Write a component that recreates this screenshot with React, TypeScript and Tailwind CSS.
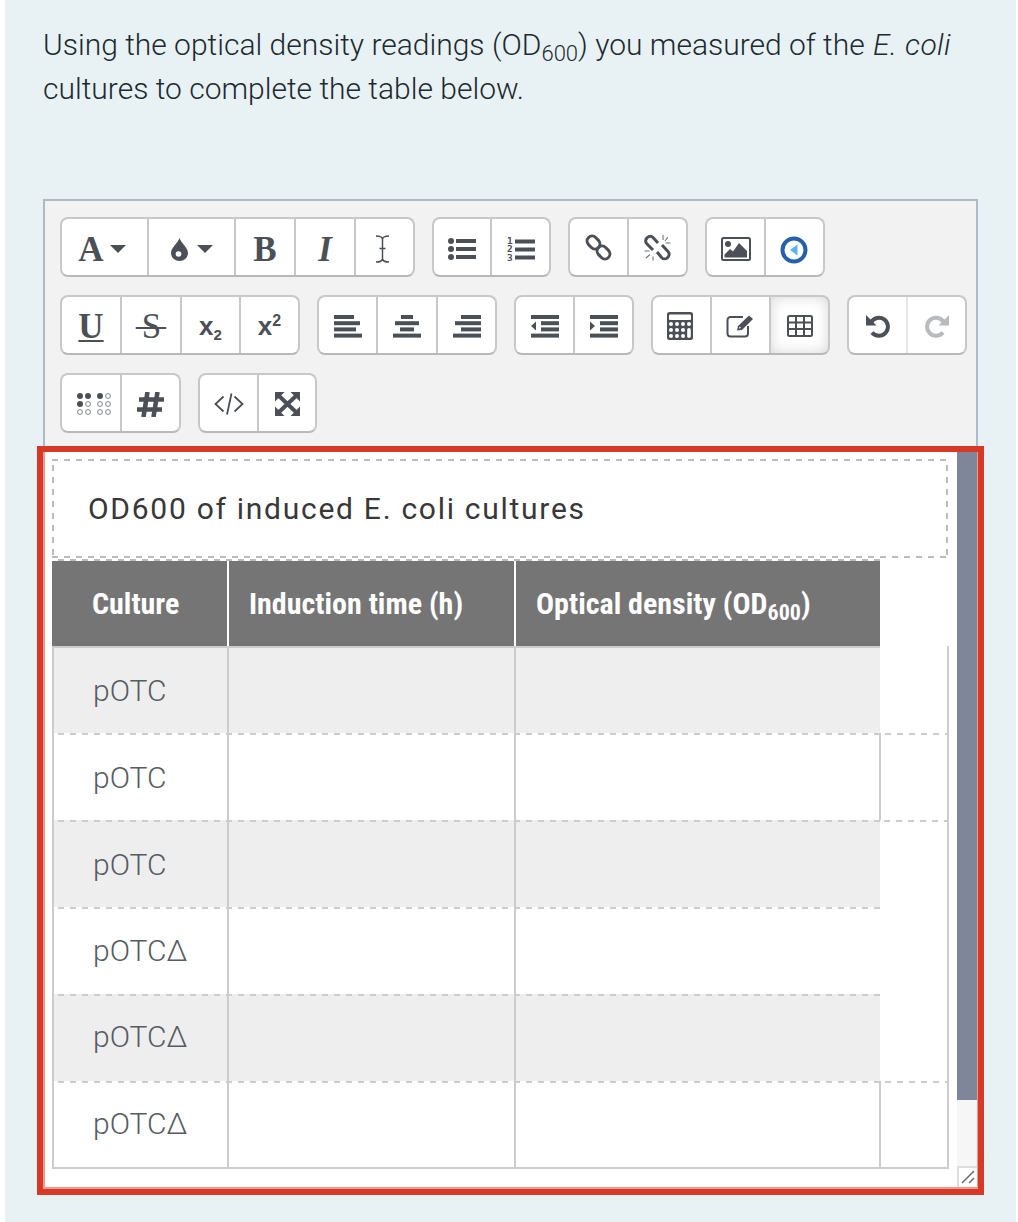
import type { ReactNode } from "react";

const ink = "#4b5057";

function Caret() {
  return (
    <svg width="16" height="8" viewBox="0 0 16 8" className="ml-[6px]">
      <path d="M0 0h16l-8 8z" fill={ink} />
    </svg>
  );
}

function Btn({ w = "w-[59px]", first, light, active, children }: { w?: string; first?: boolean; light?: boolean; active?: boolean; children: ReactNode }) {
  return (
    <div
      className={`${w} h-full pt-[2px] flex items-center justify-center ${first ? "" : light ? "border-l-2 border-[#e6e6e6]" : "border-l-2 border-[#c8c8c8]"} ${active ? "rounded-r-[6px] shadow-[inset_0_0_14px_rgba(0,0,0,0.16)]" : ""}`}
    >
      {children}
    </div>
  );
}

function Group({ children }: { children: ReactNode }) {
  return <div className="flex h-[60px] bg-white border-2 border-[#c8c8c8] border-b-[#b8b8b8] rounded-[8px]">{children}</div>;
}

const serif = "font-['Liberation_Serif'] text-[35px] leading-none text-[#4b5057]";

function Bars({ rows }: { rows: [number, number][] }) {
  return (
    <svg width="28" height="23" viewBox="0 0 28 23">
      {rows.map(([x, w], i) => (
        <rect key={i} x={x} y={i * 6.2} width={w} height="4" fill={ink} />
      ))}
    </svg>
  );
}

function IndentIcon({ arrow }: { arrow: string }) {
  return (
    <svg width="28" height="23" viewBox="0 0 28 23" fill={ink}>
      <rect width="28" height="4" />
      <rect x="10" y="6.2" width="18" height="4" />
      <rect x="10" y="12.4" width="18" height="4" />
      <rect y="18.6" width="28" height="4" />
      <path d={arrow} />
    </svg>
  );
}

function BulletIcon() {
  return (
    <svg width="28" height="22" viewBox="0 0 28 22">
      {[3, 11, 19].map((y) => (
        <g key={y}>
          <circle cx="3" cy={y} r="3" fill={ink} />
          <rect x="8" y={y - 2} width="20" height="4" fill={ink} />
        </g>
      ))}
    </svg>
  );
}

function NumberIcon() {
  return (
    <svg width="28" height="26" viewBox="0 0 28 26">
      {["1", "2", "3"].map((n, i) => (
        <g key={n}>
          <text x="0" y={8 + i * 8.4} fontSize="9.5" fontWeight="700" fontFamily="DejaVu Sans Mono, monospace" fill={ink}>
            {n}
          </text>
          <rect x="8" y={3.5 + i * 8} width="20" height="4" fill={ink} />
        </g>
      ))}
    </svg>
  );
}

function LinkIcon() {
  return (
    <svg width="27" height="27" viewBox="0 0 27 27" fill="none" stroke={ink} strokeWidth="3" className="-mt-[4px]">
      <rect x="1.500" y="3.500" width="14" height="10" rx="5" transform="rotate(45 8.500 8.500)" />
      <rect x="11.500" y="13.500" width="14" height="10" rx="5" transform="rotate(45 18.500 18.500)" />
    </svg>
  );
}

function UnlinkIcon() {
  return (
    <svg width="27" height="27" viewBox="0 0 27 27" fill="none" stroke={ink} className="-mt-[4px]">
      <path d="M14 9 9 3.500a4 4 0 0 0-5.600 0l-.6.6a4 4 0 0 0 0 5.600L9 16" strokeWidth="3" />
      <path d="M18 11l6 6.500a4 4 0 0 1 0 5.600l-.6.6a4 4 0 0 1-5.600 0L13 18" strokeWidth="3" />
      <path d="M19 1v5M24 3l-3 4M26.500 9h-5M.5 17h5M2 24l4-3.500M9 26.500v-4" strokeWidth="1.1" stroke="#6f7378" />
    </svg>
  );
}

function ImageIcon() {
  return (
    <svg width="30" height="24" viewBox="0 0 30 24">
      <rect x="1" y="1" width="28" height="22" rx="1.5" fill="none" stroke={ink} strokeWidth="2" />
      <circle cx="7" cy="7" r="3" fill={ink} />
      <path d="M3.500 20.500v-3L9 12l3 2.500L18 6l8 8v6.500z" fill={ink} />
    </svg>
  );
}

function MediaIcon() {
  return (
    <svg width="28" height="28" viewBox="0 0 28 28" className="-ml-[2px] mt-[2px]">
      <circle cx="14" cy="14" r="11.5" fill="#fff" stroke="#2561ab" strokeWidth="4" />
      <path d="M17.500 8.500v11L10 14z" fill="#5cb2ea" />
    </svg>
  );
}

function CalcIcon() {
  const cols = [4, 10, 16, 22];
  return (
    <svg width="26" height="28" viewBox="0 0 26 28" className="-ml-[3px]">
      <rect width="26" height="28" rx="2.5" fill={ink} />
      <rect x="2" y="2.500" width="22" height="5.500" rx="1" fill="#fff" />
      {[12, 18, 24].map((y) =>
        cols.slice(0, 3).map((x) => <circle key={`${x}-${y}`} cx={x} cy={y} r="2" fill="#fff" />),
      )}
      <circle cx={cols[3]} cy="12" r="2" fill="#fff" />
      <rect x="20.200" y="16" width="3.600" height="10" rx="1.800" fill="#fff" />
    </svg>
  );
}

function EditIcon() {
  return (
    <svg width="29" height="24" viewBox="0 0 29 24" fill="none">
      <path d="M22 12v7.500a3 3 0 0 1-3 3H4.500a3 3 0 0 1-3-3V6a3 3 0 0 1 3-3H17" stroke={ink} strokeWidth="2" />
      <path d="M11 16.500l1-4.500L23 1.500l4 3.500L16 16z" fill={ink} />
      <path d="M13 14.500l.5-2 1.700 1.600z" fill="#fff" />
    </svg>
  );
}

function TableIcon() {
  return (
    <svg width="26" height="22" viewBox="0 0 26 22" fill="none" stroke={ink} strokeWidth="2">
      <rect x="1" y="1" width="24" height="20" rx="1.5" />
      <path d="M1 7.500h24M1 14h24M9 1v20M17 1v20" />
    </svg>
  );
}

function UndoIcon({ color = ink, flip }: { color?: string; flip?: boolean }) {
  return (
    <svg width="24" height="24" viewBox="0 0 24 24" className={flip ? "-scale-x-100" : ""}>
      <path d="M5 8.500A9 9 0 1 1 6 18.500" fill="none" stroke={color} strokeWidth="4" />
      <path d="M0 1v10.500h10.500z" fill={color} />
    </svg>
  );
}

function CursorIcon() {
  return (
    <svg width="15" height="28" viewBox="0 0 15 28" fill="none" stroke={ink} strokeWidth="1.5" className="-ml-[4px]">
      <path d="M1 1c3 0 6 .5 6.500 3v20c-.5 2.500-3.500 3-6.500 3M14 1c-3 0-6 .5-6.500 3v20c.5 2.500 3.500 3 6.500 3M4.500 13.500h6" />
    </svg>
  );
}

function BrailleIcon() {
  const dots = [
    [3, 3, 1],
    [11, 3, 1],
    [3, 11, 1],
    [11, 11, 0],
    [3, 19, 0],
    [11, 19, 0],
    [23, 3, 1],
    [31, 3, 0],
    [23, 11, 0],
    [31, 11, 0],
    [23, 19, 0],
    [31, 19, 0],
  ];
  return (
    <svg width="34" height="22" viewBox="0 0 34 22" className="ml-[5px]">
      {dots.map(([x, y, on], i) =>
        on ? <circle key={i} cx={x} cy={y} r="3" fill={ink} /> : <circle key={i} cx={x} cy={y} r="2.400" fill="none" stroke="#80848a" strokeWidth="1" />,
      )}
    </svg>
  );
}

function HashIcon() {
  return (
    <svg width="27" height="25" viewBox="0 0 27 25" fill="none" stroke={ink} strokeWidth="4.6">
      <path d="M10.500 0 6.500 25M20.500 0l-4 25M2 7.500h25M0 17.500h25" />
    </svg>
  );
}

function CodeIcon() {
  return (
    <svg width="30" height="24" viewBox="0 0 30 24" fill="none" stroke={ink} strokeWidth="1.8">
      <path d="M9.500 4.500 1.500 12l8 7.500M20.500 4.500l8 7.500-8 7.500M17.500 1.500 13 22.500" />
    </svg>
  );
}

function ExpandIcon() {
  return (
    <svg width="25" height="24" viewBox="0 0 25 24" fill={ink}>
      <path d="M0 0h9.500L0 9.500zM25 0v9.500L15.500 0zM0 24v-9.500L9.500 24zM25 24h-9.500l9.500-9.500z" />
      <path d="M3 3l19 18M22 3 3 21" stroke={ink} strokeWidth="4" />
    </svg>
  );
}

const toolbar = (
  <div className="flex flex-col gap-[18px] pl-[15px] pt-[16px] pb-[13px] bg-[#f2f2f3]">
    <div className="flex gap-[17px] [&>div>div]:pt-[4px]">
      <Group>
        <Btn w="w-[85px]" first>
          <span className={`${serif} font-bold -ml-[5px]`}>A</span>
          <Caret />
        </Btn>
        <Btn w="w-[87px]">
          <svg width="17" height="23" viewBox="0 0 17 23">
            <path d="M8.500 0C10 5 17 9.500 17 15a8.500 8 0 0 1-17 0C0 9.500 7 5 8.500 0z" fill={ink} />
            <circle cx="7.500" cy="16" r="2.800" fill="#fff" />
          </svg>
          <span className="ml-[3px]">
            <Caret />
          </span>
        </Btn>
        <Btn w="w-[60px]">
          <span className={`${serif} font-bold`}>B</span>
        </Btn>
        <Btn w="w-[60px]">
          <span className={`${serif} font-bold italic`}>I</span>
        </Btn>
        <Btn>
          <CursorIcon />
        </Btn>
      </Group>
      <Group>
        <Btn w="w-[56px]" first>
          <BulletIcon />
        </Btn>
        <Btn>
          <NumberIcon />
        </Btn>
      </Group>
      <Group>
        <Btn w="w-[57px]" first>
          <LinkIcon />
        </Btn>
        <Btn>
          <UnlinkIcon />
        </Btn>
      </Group>
      <Group>
        <Btn w="w-[57px]" first>
          <ImageIcon />
        </Btn>
        <Btn>
          <MediaIcon />
        </Btn>
      </Group>
    </div>
    <div className="flex gap-[17px]">
      <Group>
        <Btn w="w-[58px]" first>
          <span className={`${serif} font-bold underline underline-offset-[2px] decoration-2 text-[31px]`}>U</span>
        </Btn>
        <Btn w="w-[60px]">
          <span className={`${serif} line-through decoration-2 tracking-[-1px] text-[33px]`}>{"\u2009S\u2009"}</span>
        </Btn>
        <Btn>
          <span className="font-['Liberation_Sans'] font-bold text-[26px] leading-none text-[#4b5057] pt-[2px]">
            x<span className="text-[15px] align-[-5px]">2</span>
          </span>
        </Btn>
        <Btn>
          <span className="font-['Liberation_Sans'] font-bold text-[26px] leading-none text-[#4b5057]">
            x<span className="text-[16px] align-[9px]">2</span>
          </span>
        </Btn>
      </Group>
      <Group>
        <Btn w="w-[57px]" first>
          <Bars rows={[[0, 20], [0, 26], [0, 22], [0, 28]]} />
        </Btn>
        <Btn w="w-[60px]">
          <Bars rows={[[8, 12], [2, 24], [7, 14], [0, 28]]} />
        </Btn>
        <Btn>
          <Bars rows={[[8, 20], [2, 26], [8, 20], [0, 28]]} />
        </Btn>
      </Group>
      <Group>
        <Btn w="w-[57px]" first>
          <IndentIcon arrow="M5 6.500v9L0 11z" />
        </Btn>
        <Btn>
          <IndentIcon arrow="M0 6.500v9L5 11z" />
        </Btn>
      </Group>
      <Group>
        <Btn w="w-[57px]" first>
          <CalcIcon />
        </Btn>
        <Btn>
          <EditIcon />
        </Btn>
        <Btn active>
          <TableIcon />
        </Btn>
      </Group>
      <Group>
        <Btn w="w-[57px]" first>
          <UndoIcon />
        </Btn>
        <Btn light>
          <UndoIcon color="#b7bbbe" flip />
        </Btn>
      </Group>
    </div>
    <div className="flex gap-[17px]">
      <Group>
        <Btn w="w-[58px]" first>
          <BrailleIcon />
        </Btn>
        <Btn>
          <HashIcon />
        </Btn>
      </Group>
      <Group>
        <Btn w="w-[57px]" first>
          <CodeIcon />
        </Btn>
        <Btn w="w-[58px]">
          <ExpandIcon />
        </Btn>
      </Group>
    </div>
  </div>
);

const rows = [
  { label: "pOTC", grey: true, first: true, nudge: "" },
  { label: "pOTC", dashRight: true, sideLine: true, nudge: "pt-[2px]" },
  { label: "pOTC", grey: true, dashRight: true, nudge: "pt-[2px]" },
  { label: "pOTCΔ", nudge: "" },
  { label: "pOTCΔ", grey: true, nudge: "pb-[2px]" },
  { label: "pOTCΔ", dashRight: true, sideLine: true, last: true, nudge: "pb-[2px]" },
];

const dashLine = "bg-[linear-gradient(90deg,#cccccc_6px,transparent_6px)] bg-[size:12px_2px] bg-[position:4px_0] bg-repeat-x";

function Row({ label, grey, first, dashRight, sideLine, last, nudge }: { label: string; grey?: boolean; first?: boolean; dashRight?: boolean; sideLine?: boolean; last?: boolean; nudge: string }) {
  return (
    <div className={`flex ${last ? "h-[86px]" : "h-[87px]"}`}>
      <div className={`flex w-[826px] ${first ? "border-t-2 border-[#cccccc]" : dashLine} ${grey ? "bg-[#eeeeee]" : "bg-white"}`}>
        <div className={`w-[175px] pl-[39px] flex items-center border-r-2 border-[#cccccc] text-[30px] font-light text-[#555c63] ${nudge}`}>{label}</div>
        <div className="w-[287px] border-r-2 border-[#cccccc]" />
        <div className="flex-1" />
      </div>
      <div className={`flex-1 ${dashRight ? dashLine : ""} ${sideLine ? "-ml-px border-l-2 border-[#cccccc]" : ""}`} />
    </div>
  );
}

export default function App() {
  return (
    <div className="w-[1018px] h-[1222px] overflow-hidden bg-white pl-[5px] pr-[2px] font-['Roboto',sans-serif]">
      <div className="h-full bg-[#e8f2f5] pl-[38px] pr-[38px] pt-[23px]">
        <p className="text-[30px] leading-[44px] font-light text-[#1d2a31] h-[176px]">
          Using the optical density readings (OD<sub className="text-[22px]">600</sub>) you measured of the{" "}
          <em className="pl-px tracking-[0.4px]">E. coli</em>
          <br />
          cultures to complete the table below.
        </p>
        <div className="w-[935px] border-x-2 border-t-2 border-[#adbac7]">
          {toolbar}
          <div className="-mx-[8px] flex h-[749px] border-[6px] border-[#d63a26] bg-white">
            <div className="flex-1 flex border-l-2 border-b-2 border-[#eb9a8c]">
              <div className="flex-1 pl-[7px] pr-[9px] pt-[7px]">
                <div className="h-[99px] pl-[36px] flex items-center text-[30px] tracking-[1.72px] text-[#383838] bg-[linear-gradient(90deg,#bbbbbb_6px,transparent_6px),linear-gradient(90deg,#bbbbbb_6px,transparent_6px),linear-gradient(0deg,#bbbbbb_6px,transparent_6px),linear-gradient(0deg,#bbbbbb_6px,transparent_6px)] bg-[size:12px_2px,12px_2px,2px_12px,2px_12px] bg-[position:0_0,0_100%,0_0,100%_0] [background-repeat:repeat-x,repeat-x,repeat-y,repeat-y]">
                  OD600 of induced E. coli cultures
                </div>
                <div className="flex w-[828px] h-[88px] pt-[3px] bg-white bg-[linear-gradient(90deg,#bbbbbb_6px,transparent_6px),linear-gradient(#757575,#757575)] bg-[size:12px_2px,100%_85px] bg-[position:6px_1px,0_3px] [background-repeat:repeat-x,no-repeat] text-white text-[30px] font-bold [font-stretch:75%]">
                  <div className="w-[175px] pl-[40px] flex items-center">Culture</div>
                  <div className="w-[287px] pl-[20px] flex items-center border-l-2 border-white">Induction time (h)</div>
                  <div className="flex-1 pl-[20px] flex items-center border-l-2 border-white">
                    Optical density (OD<sub className="text-[22px] bottom-[-9px]">600</sub>)
                  </div>
                </div>
                <div className="-mr-px border-x-2 border-b-2 border-[#cccccc]">
                  {rows.map((r, i) => (
                    <Row key={i} {...r} />
                  ))}
                </div>
              </div>
              <div className="w-[20px] flex flex-col">
                <div className="h-[648px] bg-[#7f8699]" />
                <div className="flex-1 bg-[#f6f6f6]" />
                <div className="h-[21px] border-t-2 border-l-2 border-[#dddddd] bg-white flex items-center justify-center">
                  <svg width="15" height="15" viewBox="0 0 15 15" stroke="#6b6b6b" strokeWidth="1.5">
                    <path d="M1 13 13 1M8 13l5-5" />
                  </svg>
                </div>
              </div>
            </div>
            <div className="w-px bg-[#eb9a8c]" />
          </div>
        </div>
      </div>
    </div>
  );
}
